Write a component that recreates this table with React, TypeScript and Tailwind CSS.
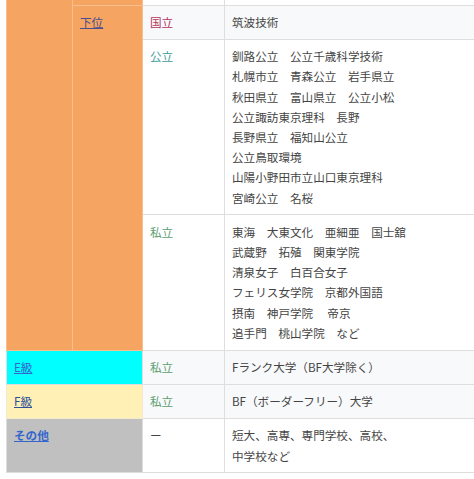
import React from 'react';

const font = { fontFamily: '"Noto Sans CJK JP", "Noto Sans", sans-serif' };

const kokuritsu = ['筑波技術'];

const kouritsu = [
  '釧路公立　公立千歳科学技術',
  '札幌市立　青森公立　岩手県立',
  '秋田県立　富山県立　公立小松',
  '公立諏訪東京理科　長野',
  '長野県立　福知山公立',
  '公立鳥取環境',
  '山陽小野田市立山口東京理科',
  '宮崎公立　名桜',
];

const shiritsu = [
  '東海　大東文化　亜細亜　国士舘',
  '武蔵野　拓殖　関東学院',
  '清泉女子　白百合女子',
  'フェリス女学院　京都外国語',
  '摂南　神戸学院　 帝京',
  '追手門　桃山学院　など',
];

const sonota = ['短大、高専、専門学校、高校、', '中学校など'];

const Lines = ({ items }: { items: string[] }) => (
  <>
    {items.map((line, i) => (
      <div key={i} className="whitespace-pre">
        {line}
      </div>
    ))}
  </>
);

// shared cell classes
const td = 'align-top px-[7px] py-[6.5px] border border-[#dedede]';
const orange = 'bg-[#f6a461] border-[#f8be8e]';
const link = 'underline text-[#3366cc]';

export default function App() {
  return (
    <div className="w-[474px] h-[479px] overflow-hidden bg-white" style={font}>
      <table className="ml-[6px] w-[472px] border-collapse text-[11.6px] leading-[20.2px] text-[#444444] table-fixed">
        <colgroup>
          <col className="w-[66px]" />
          <col className="w-[70px]" />
          <col className="w-[82px]" />
          <col />
        </colgroup>
        <tbody>
          {/* tail of the previous row, cut off at the top */}
          <tr className="h-[5px]">
            <td rowSpan={4} className={`${td} ${orange} border-t-0`} />
            <td className={`${orange} border border-[#f8be8e] border-t-0 p-0`} />
            <td className="border border-[#dedede] border-t-0 p-0 bg-white" />
            <td className="border border-[#dedede] border-t-0 border-r-0 p-0 bg-white" />
          </tr>
          <tr>
            <td rowSpan={3} className={`${td} ${orange}`}>
              <span className="underline text-[#4b4d8f]">下位</span>
            </td>
            <td className={`${td} bg-[#f8f9fa] text-[#b5365f]`}>国立</td>
            <td className={`${td} bg-[#f8f9fa] border-r-0`}>
              <Lines items={kokuritsu} />
            </td>
          </tr>
          <tr>
            <td className={`${td} bg-white text-[#3d9c9c]`}>公立</td>
            <td className={`${td} bg-white border-r-0`}>
              <Lines items={kouritsu} />
            </td>
          </tr>
          <tr>
            <td className={`${td} bg-white text-[#5c9e70]`}>私立</td>
            <td className={`${td} bg-white border-r-0`}>
              <Lines items={shiritsu} />
            </td>
          </tr>
          <tr>
            <td colSpan={2} className={`${td} bg-[#00ffff] border-[#c8f4f4]`}>
              <span className={link}>E級</span>
            </td>
            <td className={`${td} bg-[#f8f9fa] text-[#5c9e70]`}>私立</td>
            <td className={`${td} bg-[#f8f9fa] border-r-0`}>Fランク大学（BF大学除く）</td>
          </tr>
          <tr>
            <td colSpan={2} className={`${td} bg-[#fff1b5] border-[#f2ead0]`}>
              <span className="underline text-[#2e4f9c]">F級</span>
            </td>
            <td className={`${td} bg-[#f8f9fa] text-[#5c9e70]`}>私立</td>
            <td className={`${td} bg-[#f8f9fa] border-r-0`}>BF（ボーダーフリー）大学</td>
          </tr>
          <tr>
            <td colSpan={2} className={`${td} bg-[#c0c0c0] border-[#d4d4d4]`}>
              <span className={`${link} font-bold`}>その他</span>
            </td>
            <td className={`${td} bg-white`}>ー</td>
            <td className={`${td} bg-white border-r-0`}>
              <Lines items={sonota} />
            </td>
          </tr>
        </tbody>
      </table>
    </div>
  );
}
